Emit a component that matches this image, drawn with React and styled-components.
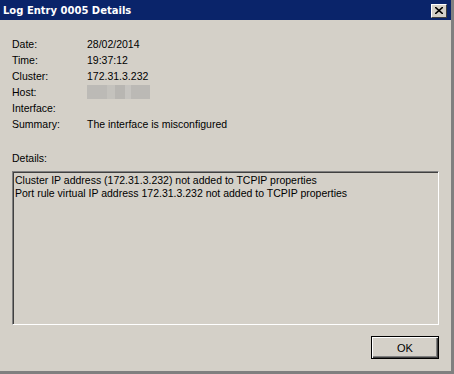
import React from 'react';
import styled, { createGlobalStyle } from 'styled-components';

const GlobalStyle = createGlobalStyle`
    *, *::before, *::after {
        box-sizing: border-box;
    }
    html, body {
        margin: 0;
        padding: 0;
        background: #808080;
    }
    body {
        font-family: "Liberation Sans", Arial, sans-serif;
        font-size: 10.5px;
    }
`;

const Window = styled.div`
    width: 454px;
    height: 374px;
    background: #d4d0c8;
    border-right: 3px solid #808080;
    border-bottom: 3px solid #808080;
    display: flex;
    flex-direction: column;
    color: #000;
`;

const TitleBar = styled.div`
    height: 21px;
    background: #0a246a;
    display: flex;
    align-items: center;
    justify-content: space-between;
    padding: 0 4px 0 3px;
    h1 {
        margin: 0;
        font-family: "DejaVu Sans", Verdana, sans-serif;
        font-size: 10px;
        font-weight: bold;
        color: #fff;
    }
`;

const CloseButton = styled.button`
    width: 16px;
    height: 14px;
    padding: 0;
    margin-top: 1px;
    background: #d4d0c8;
    border: 1px solid;
    border-color: #fff #404040 #404040 #fff;
    display: flex;
    align-items: center;
    justify-content: center;
`;

const Body = styled.div`
    flex: 1;
    display: flex;
    flex-direction: column;
    padding: 16px 12px 12px 12px;
`;

const Fields = styled.div`
    display: grid;
    grid-template-columns: 75px 1fr;
    grid-auto-rows: 16px;
    line-height: 16px;
`;

const Blur = styled.div`
    width: 63px;
    height: 14px;
    margin-top: 1px;
    background: linear-gradient(90deg, #bcbab6 0 20px, #c4c2bd 20px 28px, #b8b6b2 28px 38px, #c6c4c0 38px 44px, #bbb9b5 44px);
`;

const DetailsLabel = styled.div`
    margin-top: 19px;
    line-height: 14px;
`;

const TextArea = styled.div`
    margin-top: 6px;
    height: 154px;
    border: 1px solid;
    border-color: #808080 #fff #fff #808080;
    box-shadow: inset 1px 1px 0 #404040;
    padding: 2px 2px;
    line-height: 13px;
`;

const Footer = styled.div`
    display: flex;
    justify-content: flex-end;
    margin-top: 11px;
`;

const OkButton = styled.button`
    width: 68px;
    height: 23px;
    font-family: "Liberation Sans", Arial, sans-serif;
    font-size: 11px;
    background: #d4d0c8;
    border: 1px solid #000;
    box-shadow: inset 1px 1px 0 #fff, inset -1px -1px 0 #404040, inset -2px -2px 0 #808080;
    padding: 0;
`;

const rows = [
    ['Date:', '28/02/2014'],
    ['Time:', '19:37:12'],
    ['Cluster:', '172.31.3.232'],
    ['Host:', <Blur key="b" />],
    ['Interface:', ''],
    ['Summary:', 'The interface is misconfigured'],
];

export default function App() {
    return (
        <>
            <GlobalStyle />
            <Window>
                <TitleBar>
                    <h1>Log Entry 0005 Details</h1>
                    <CloseButton>
                        <svg width="8" height="7" viewBox="0 0 8 7">
                            <path d="M0 0 L8 7 M8 0 L0 7" stroke="#000" strokeWidth="1.6" />
                        </svg>
                    </CloseButton>
                </TitleBar>
                <Body>
                    <Fields>
                        {rows.map(([label, value]) => (
                            <React.Fragment key={label}>
                                <span>{label}</span>
                                <span>{value}</span>
                            </React.Fragment>
                        ))}
                    </Fields>
                    <DetailsLabel>Details:</DetailsLabel>
                    <TextArea>
                        <div>Cluster IP address (172.31.3.232) not added to TCPIP properties</div>
                        <div>Port rule virtual IP address 172.31.3.232 not added to TCPIP properties</div>
                    </TextArea>
                    <Footer>
                        <OkButton>OK</OkButton>
                    </Footer>
                </Body>
            </Window>
        </>
    );
}
